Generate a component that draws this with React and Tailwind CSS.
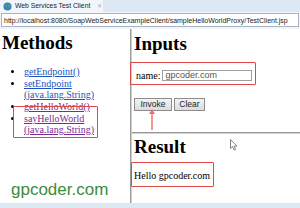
import React from "react";

const serif = { fontFamily: '"Liberation Serif", "Times New Roman", serif' };
const sans = { fontFamily: '"Liberation Sans", Arial, sans-serif' };

function Globe() {
  return (
    <svg width="9" height="9" viewBox="0 0 10 10">
      <circle cx="5" cy="5" r="4.5" fill="#3b82c4" />
      <path d="M2 3 Q4 2 5 4 Q4 6 2.5 6 Z" fill="#5aa94a" />
      <path d="M6 2 Q8 3 8 5 Q7 7 6 6 Z" fill="#5aa94a" />
    </svg>
  );
}

export default function App() {
  return (
    <div className="relative w-[300px] h-[208px] overflow-hidden bg-white flex flex-col" style={sans}>
      {/* tab bar */}
      <div className="h-[12px] bg-[#dde8f5] flex items-end">
        <div className="h-[12px] w-[103px] bg-[#f2f6fb] flex items-center pl-[3px] gap-[2px]">
          <Globe />
          <span className="text-[6.8px] leading-none text-[#222] ml-[1px] whitespace-nowrap">Web Services Test Client</span>
          <span className="text-[6px] leading-none text-[#aaa] ml-[5px]">✕</span>
        </div>
      </div>
      {/* address bar */}
      <div className="h-[17px] bg-[#f2f6fb] px-[1px] pt-[1px]">
        <div className="h-[14px] bg-white border border-[#a9b4c2] flex items-center pl-[2px] overflow-hidden">
          <span className="text-[7px] leading-none text-[#222] whitespace-nowrap">
            http://localhost:8080/SoapWebServiceExampleClient/sampleHelloWorldProxy/TestClient.jsp
          </span>
        </div>
      </div>
      {/* frames */}
      <div className="flex-1 flex" style={serif}>
        <div className="w-[130px] pl-[2px] pt-[4px] flex flex-col">
          <div className="text-[19px] font-bold leading-none text-black">Methods</div>
          <ul className="list-disc pl-[22px] mt-[14px] text-[10px] leading-[11px]">
            <li className="mb-[1px]"><span className="text-[#1a55c0] underline">getEndpoint()</span></li>
            <li className="mb-[1px]"><span className="text-[#1a55c0] underline">setEndpoint<br />(java.lang.String)</span></li>
            <li className="mb-[1px]"><span className="text-[#7b2a9a] underline">getHelloWorld()</span></li>
            <li><span className="text-[#7b2a9a] underline">sayHelloWorld<br />(java.lang.String)</span></li>
          </ul>
          <div className="mt-[46px] pl-[9px] text-[17px] leading-none text-[#3d8b3d]" style={sans}>gpcoder.com</div>
        </div>
        <div className="w-[2px] bg-[#9a9a9a] border-r border-[#d0d0d0]" />
        <div className="flex-1 flex flex-col">
          <div className="h-[103px] pl-[2px] pt-[5px]">
            <div className="text-[19px] font-bold leading-none text-black">Inputs</div>
            <div className="flex items-center mt-[17px] ml-[2px] gap-[2px]">
              <span className="text-[10px] leading-none text-black">name:</span>
              <div className="w-[90px] h-[11px] border border-[#a0a0a0] flex items-center pl-[2px]">
                <span className="text-[9px] leading-none text-[#555]" style={sans}>gpcoder.com</span>
              </div>
            </div>
            <div className="flex gap-[2px] mt-[17px]">
              <div className="w-[38px] h-[13px] border border-[#8c8c8c] bg-gradient-to-b from-[#f4f4f4] to-[#dcdcdc] flex items-center justify-center text-[8.5px] leading-none text-[#222]" style={sans}>Invoke</div>
              <div className="w-[31px] h-[13px] border border-[#8c8c8c] bg-gradient-to-b from-[#f4f4f4] to-[#dcdcdc] flex items-center justify-center text-[8.5px] leading-none text-[#222]" style={sans}>Clear</div>
            </div>
          </div>
          <div className="h-[2px] bg-[#9a9a9a] border-b border-[#d0d0d0]" />
          <div className="flex-1 pl-[2px] pt-[3px]">
            <div className="text-[19px] font-bold leading-none text-black">Result</div>
            <div className="text-[10px] leading-none text-black mt-[15px]">Hello gpcoder.com</div>
          </div>
        </div>
      </div>
      {/* bottom strip */}
      <div className="h-[5px] bg-[#dde8f5]" />

      {/* annotations */}
      <div className="absolute left-[13px] top-[106px] w-[85px] h-[32px] border-[1.5px] border-[#e04848] rounded-[1px]" />
      <div className="absolute left-[130px] top-[62px] w-[126px] h-[23px] border-[1.5px] border-[#e04848] rounded-[1px]" />
      <div className="absolute left-[131px] top-[162px] w-[83px] h-[25px] border-[1.5px] border-[#e04848] rounded-[1px]" />
      <svg className="absolute left-[148px] top-[108px]" width="8" height="22" viewBox="0 0 8 22">
        <line x1="4" y1="4" x2="4" y2="22" stroke="#f07070" strokeWidth="1.5" />
        <path d="M1 6 L4 1 L7 6 Z" fill="#f07070" />
      </svg>
      <svg className="absolute left-[230px] top-[139px]" width="8" height="12" viewBox="0 0 8 12">
        <path d="M0.5 0.5 L0.5 9.5 L2.7 7.6 L4.2 11 L5.6 10.4 L4.2 7.1 L7 7.1 Z" fill="white" stroke="#666" strokeWidth="0.8" />
      </svg>
    </div>
  );
}
